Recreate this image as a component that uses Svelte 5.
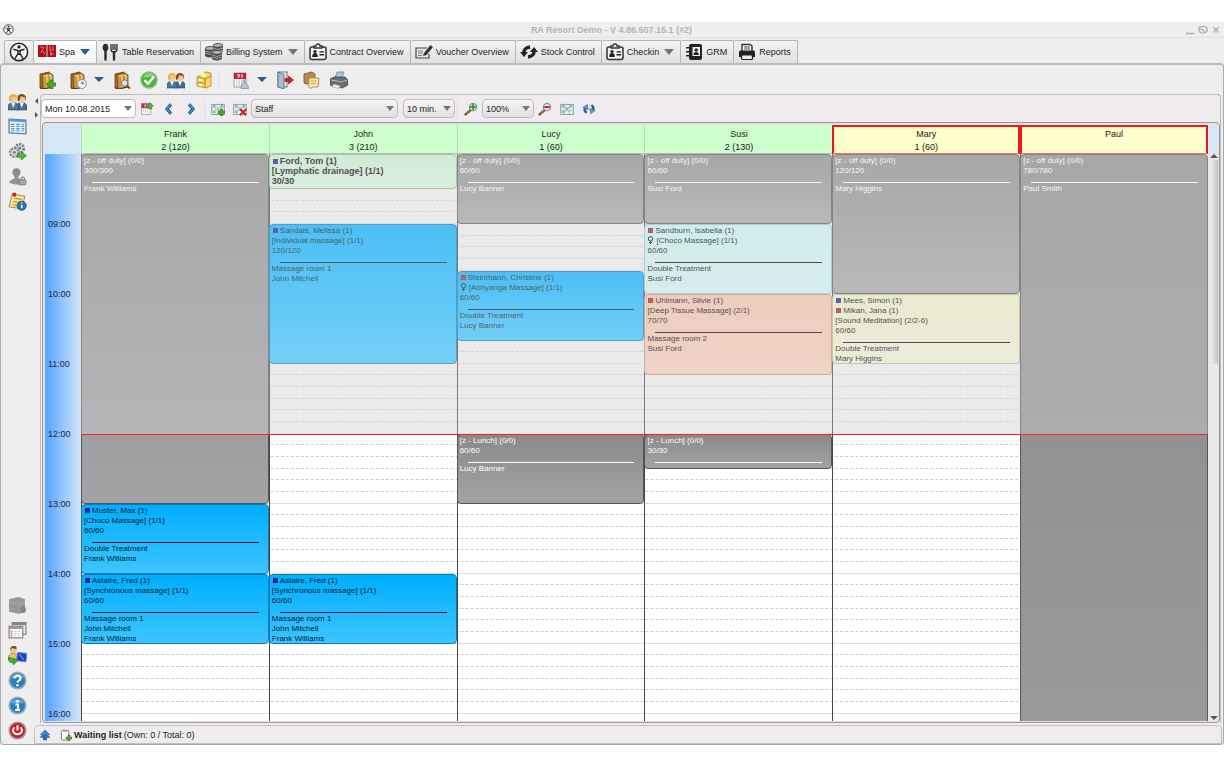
<script lang="ts">
  interface Booking {
    start: string;
    end: string;
    kind: string;
    guests?: { name: string; sex: "m" | "f" }[];
    title: string;
    female?: boolean;
    time: string;
    info?: string[];
    bold?: boolean;
  }
  interface Staff {
    name: string;
    load: string;
    warn?: boolean;
    bookings: Booking[];
  }

  const DAY_START = 8 * 60;
  const NOW = 12 * 60;

  const tabs = [
    { label: "Table Reservation", icon: "cutlery" },
    { label: "Billing System", icon: "coins", menu: true },
    { label: "Contract Overview", icon: "badge" },
    { label: "Voucher Overview", icon: "voucher" },
    { label: "Stock Control", icon: "cycle" },
    { label: "Checkin", icon: "badge", menu: true },
    { label: "GRM", icon: "contacts" },
    { label: "Reports", icon: "report" },
  ];

  const sideTop = [
    { label: "Guests", icon: "people" },
    { label: "Day list", icon: "list" },
    { label: "Process", icon: "gears" },
    { label: "Lock user", icon: "userlock" },
    { label: "Notes", icon: "noteinfo" },
  ];
  const sideBottom = [
    { label: "Database", icon: "server" },
    { label: "Windows", icon: "windows" },
    { label: "Switch user", icon: "switch" },
    { label: "Help", icon: "help" },
    { label: "Info", icon: "info" },
    { label: "Quit", icon: "power" },
  ];

  const offDuty = (end: string, time: string, who: string): Booking => ({
    start: "08:00", end, kind: "grey", title: "[z - off duty] (0/0)", time, info: [who],
  });
  const astaire: Booking = {
    start: "14:00", end: "15:00", kind: "blue",
    guests: [{ name: "Astaire, Fred (1)", sex: "m" }],
    title: "[Synchronous massage] (1/1)", time: "60/60",
    info: ["Massage room 1", "John Mitchell", "Frank Williams"],
  };

  const staff: Staff[] = [
    {
      name: "Frank", load: "2 (120)",
      bookings: [
        offDuty("13:00", "300/300", "Frank Williams"),
        {
          start: "13:00", end: "14:00", kind: "blue",
          guests: [{ name: "Muster, Max (1)", sex: "m" }],
          title: "[Choco Massage] (1/1)", time: "60/60",
          info: ["Double Treatment", "Frank Williams"],
        },
        astaire,
      ],
    },
    {
      name: "John", load: "3 (210)",
      bookings: [
        {
          start: "08:00", end: "08:30", kind: "green", bold: true,
          guests: [{ name: "Ford, Tom (1)", sex: "m" }],
          title: "[Lymphatic drainage] (1/1)", time: "30/30",
        },
        {
          start: "09:00", end: "11:00", kind: "blue",
          guests: [{ name: "Sandals, Melissa (1)", sex: "m" }],
          title: "[Individual massage] (1/1)", time: "120/120",
          info: ["Massage room 1", "John Mitchell"],
        },
        astaire,
      ],
    },
    {
      name: "Lucy", load: "1 (60)",
      bookings: [
        offDuty("09:00", "60/60", "Lucy Banner"),
        {
          start: "09:40", end: "10:40", kind: "blue", female: true,
          guests: [{ name: "Steinmann, Christine (1)", sex: "f" }],
          title: "[Abhyanga Massage] (1/1)", time: "60/60",
          info: ["Double Treatment", "Lucy Banner"],
        },
        { start: "12:00", end: "13:00", kind: "grey", title: "[z - Lunch] (0/0)", time: "60/60", info: ["Lucy Banner"] },
      ],
    },
    {
      name: "Susi", load: "2 (130)",
      bookings: [
        offDuty("09:00", "60/60", "Susi Ford"),
        {
          start: "09:00", end: "10:00", kind: "aqua", female: true,
          guests: [{ name: "Sandburn, Isabella (1)", sex: "f" }],
          title: "[Choco Massage] (1/1)", time: "60/60",
          info: ["Double Treatment", "Susi Ford"],
        },
        {
          start: "10:00", end: "11:10", kind: "peach",
          guests: [{ name: "Uhlmann, Silvie (1)", sex: "f" }],
          title: "[Deep Tissue Massage] (2/1)", time: "70/70",
          info: ["Massage room 2", "Susi Ford"],
        },
        { start: "12:00", end: "12:30", kind: "grey", title: "[z - Lunch] (0/0)", time: "30/30", info: [] },
      ],
    },
    {
      name: "Mary", load: "1 (60)", warn: true,
      bookings: [
        offDuty("10:00", "120/120", "Mary Higgins"),
        {
          start: "10:00", end: "11:00", kind: "cream",
          guests: [{ name: "Mees, Simon (1)", sex: "m" }, { name: "Mikan, Jana (1)", sex: "f" }],
          title: "[Sound Meditation] (2/2-6)", time: "60/60",
          info: ["Double Treatment", "Mary Higgins"],
        },
      ],
    },
    { name: "Paul", load: "", warn: true, bookings: [offDuty("21:00", "780/780", "Paul Smith")] },
  ];

  const hours = ["09:00", "10:00", "11:00", "12:00", "13:00", "14:00", "15:00", "16:00"];
  const slots = Array.from({ length: 60 }, (_, i) => i);

  let date = $state("Mon 10.08.2015");

  function row(time: string) {
    const [h, m] = time.split(":").map(Number);
    return (h * 60 + m - DAY_START) / 10 + 1;
  }
</script>

{#snippet bookShape()}
  <path d="M2 3l9-2 1 14-9 3-1-1z" fill="#a8702c" stroke="#5e3a12" stroke-width=".8" />
  <path d="M4 4l8-2 3 2v12l-10 2z" fill="#c8923f" stroke="#6e4516" stroke-width=".8" />
  <path d="M6 5l3-.6v12M11 4l2 1v10" stroke="#f5dc96" stroke-width="1.2" fill="none" />
  <path d="M2 16l3 2 10-2" stroke="#5e3a12" fill="none" />
{/snippet}

{#snippet personShape(x: number, hair: string, body: string)}
  <g transform="translate({x} 0)">
    <path d="M0 17q-1-7 5-7t5 7z" fill={body} stroke="#39424c" stroke-width=".6" />
    <path d="M3 10l2 5 2-5z" fill="#fff" />
    <circle cx="5" cy="6" r="3.4" fill="#f0c79a" />
    <path d="M1 9Q0 2 5 2t4 7L8 5 4 4 3 8z" fill={hair} />
  </g>
{/snippet}

{#snippet plusShape()}
  <path d="M12 9h3v3h3v3h-3v3h-3v-3H9v-3h3z" fill="#3fae2a" stroke="#1d6a12" stroke-width=".6" />
{/snippet}

{#snippet lensShape()}
  <path d="M9 10l-7 6" stroke="#7b4a22" stroke-width="3" stroke-linecap="round" />
  <path d="M9 10l-6 5" stroke="#c98d55" stroke-width="1" />
  <circle cx="11.5" cy="6.5" r="4.6" fill="#dfeaf2" stroke="#777f88" stroke-width="1.3" />
{/snippet}

{#snippet tableShape()}
  <rect x="1" y="3" width="16" height="13" fill="#e9f2f2" stroke="#6d8a96" />
  <path d="M1 7h16M1 11h16M6 3v13M12 3v13" stroke="#9cb8c2" stroke-width=".8" />
  <path d="M3 4h2v2H3zM8 8h2v2H8zM13 4h2v2h-2zM3 12h2v2H3z" fill="#4d9b8a" />
{/snippet}

{#snippet calShape()}
  <rect x="2" y="2" width="12" height="14" fill="#fff" stroke="#8a8a92" stroke-width=".8" />
  <rect x="2" y="2" width="12" height="6" fill="#c8202c" />
  <path d="M5 4h3l-2 3M10 3v4" stroke="#fff" fill="none" />
  <path d="M4 10h8M4 12h8M4 14h8" stroke="#a9b0ba" stroke-dasharray="1.5 1" />
{/snippet}

{#snippet icon(name: string, size = 18)}
  <svg class="icon" width={size} height={size} viewBox="0 0 18 18" fill="none" aria-hidden="true">
    {#if name === "logo"}
      <circle cx="9" cy="9" r="7.8" fill="#f4f4f4" stroke="#222" stroke-width="1.3" />
      <circle cx="9" cy="4.4" r="1.5" fill="#222" />
      <path d="M4 6.5l4 1.2v3L5.3 15M14 6.5l-4 1.2v3l2.7 4.3M8 8h2v3H8z" stroke="#222" stroke-width="1.3" />
    {:else if name === "spa"}
      <rect x="0" y="2" width="8.6" height="12" fill="#a80f18" />
      <rect x="9.4" y="2" width="8.6" height="12" fill="#a80f18" />
      <path d="M2 4h4l-3 6M5 8l2 3M12 3v3M15 3v3M11 7h5M12 11h4M13 8v5" stroke="#e0868b" stroke-width=".9" />
    {:else if name === "cutlery"}
      <ellipse cx="4.5" cy="4.5" rx="2.8" ry="3.8" fill="#2b2b2b" />
      <path d="M4.5 7v9.5M13 9v7.5" stroke="#2b2b2b" stroke-width="2.4" stroke-linecap="round" />
      <path d="M10 1v5q0 3 3 3t3-3V1M12 1v6M14 1v6" stroke="#2b2b2b" stroke-width="1.3" />
    {:else if name === "coins"}
      {#each [[0, 4, 14], [8, 1, 9], [7, 8, 17]] as [x, top, bottom]}
        <path d="M{x} {top + 1}v{bottom - top - 2}q5 3 10 0v-{bottom - top - 2}z" fill="#4a4a4a" />
        <path d="M{x} {top + 4}q5 3 10 0" stroke="#ccc" stroke-width=".7" />
        <path d="M{x} {top + 6}q5 3 10 0" stroke="#ccc" stroke-width=".7" />
        <ellipse cx={x + 5} cy={top + 1.4} rx="4.7" ry="1.9" fill="#bbb" stroke="#333" stroke-width=".8" />
      {/each}
    {:else if name === "badge"}
      <rect x="1" y="4" width="16" height="12.5" rx="2" fill="#f2f2f2" stroke="#333" stroke-width="1.5" />
      <path d="M5 5V3h2q0-2 2-2t2 2h2v2z" fill="#eee" stroke="#333" stroke-width="1.3" />
      <circle cx="6" cy="8.5" r="1.6" fill="#222" />
      <path d="M3.2 14q0-4 2.8-4t2.8 4zM10.5 8.2h4.5v1.4h-4.5zM10.5 11h4.5v1.4h-4.5z" fill="#222" />
    {:else if name === "voucher"}
      <path d="M12 5H1v10h13v-4" stroke="#444" stroke-width="1.2" />
      <path d="M3 8h5M3 10h5M3 12.5h4" stroke="#777" />
      <path d="M8 13l1-3 6.5-8L18 4l-6.5 8z" fill="#333" />
    {:else if name === "cycle"}
      <path d="M4 11Q3 5 10 4" stroke="#222" stroke-width="3.4" />
      <path d="M0 9h8l-4 5z" fill="#222" />
      <path d="M14 7q1 6-6 7" stroke="#222" stroke-width="3.4" />
      <path d="M18 9h-8l4-5z" fill="#222" />
    {:else if name === "contacts"}
      <rect x="4" y="1" width="13" height="16" rx="2" fill="#222" />
      <rect x="7.5" y="4" width="7.5" height="9" fill="#f3f3f3" />
      <circle cx="11.2" cy="7" r="1.7" fill="#222" />
      <path d="M8.5 12q0-3 2.7-3t2.7 3zM1 4h5v1.5H1zM1 8h5v1.5H1zM1 12h5v1.5H1z" fill="#222" />
    {:else if name === "report"}
      <path d="M4 8V1.5h8L14 3v5" fill="#f4f4f4" stroke="#333" stroke-width="1.4" />
      <path d="M6 4h6M6 6h6" stroke="#555" />
      <path d="M1 9q0-1.5 1.5-1.5h13Q17 7.5 17 9v5H1z" fill="#222" />
      <rect x="3.5" y="12" width="11" height="4.5" rx="1" fill="#eee" stroke="#222" stroke-width="1.2" />
    {:else if name === "bookadd"}
      {@render bookShape()}
      {@render plusShape()}
    {:else if name === "bookclock"}
      {@render bookShape()}
      <circle cx="13" cy="13" r="4.5" fill="#f3f5f7" stroke="#8a949d" />
      <path d="M13 10.5V13l2-1" stroke="#444" stroke-width=".9" />
    {:else if name === "booksearch"}
      {@render bookShape()}
      <path d="M13 14l4 3.5" stroke="#7b4a22" stroke-width="2" />
      <circle cx="11.5" cy="12" r="3.2" fill="#dbe8f1" stroke="#777" />
    {:else if name === "ok"}
      <circle cx="9" cy="9" r="8.2" fill="#46b53a" stroke="#a9b3a7" stroke-width="1.2" />
      <path d="M3 7q2-5 6-5t6 5q-6-2-12 0z" fill="#86d67c" />
      <path d="M4.5 9l3.5 3.7L14 5.5" stroke="#fff" stroke-width="2.4" />
    {:else if name === "people"}
      {@render personShape(8, "#7a4a1c", "#3f6f9f")}
      {@render personShape(0, "#e2b63c", "#4a78a5")}
    {:else if name === "boxes"}
      <path d="M2 6l9-5 5 1v13l-5 2-9-2z" fill="#f3d666" stroke="#b18d20" stroke-width=".8" />
      <path d="M2 6l8 2 6-3M10 8v9M2 11l8 1.5" stroke="#a98618" stroke-width=".9" />
      <path d="M7 1l5 3-2 2-5-2z" fill="#fff3b8" />
      <path d="M4 9h3M4 14h3" stroke="#fff" stroke-width="1.3" />
    {:else if name === "caluser"}
      {@render calShape()}
      <circle cx="12.5" cy="10" r="2" fill="#a8b6c6" />
      <path d="M9 17.5q0-6 3.5-6t4 6z" fill="#b9c6d6" stroke="#75879a" stroke-width=".7" />
    {:else if name === "calnew"}
      {@render calShape()}
      <path d="M13 1l4.5 4.5H15V9h-4V5.5H8.5z" fill="#4cb833" stroke="#1f7012" stroke-width=".6" />
    {:else if name === "exit"}
      <rect x="2" y="1" width="9" height="15" fill="#e8eef5" stroke="#68747f" />
      <path d="M2 1l6 2.5V18l-6-2z" fill="#aebdca" stroke="#56626d" stroke-width=".8" />
      <path d="M17.5 9l-5-4v2.5H9v3h3.5V13z" fill="#cf1a22" stroke="#7c0d12" stroke-width=".5" />
    {:else if name === "scroll"}
      <path d="M1 3l8-2 3 2v8l-8 2-3-1z" fill="#b98c4c" stroke="#6f4d20" stroke-width=".8" />
      <path d="M6 7h10l-1 9q-5-1-8 1.5L5.5 15z" fill="#f7e6a8" stroke="#a37e35" stroke-width=".8" />
      <path d="M8 10h5M8 12.5h5" stroke="#c8a65a" />
    {:else if name === "printer"}
      <path d="M5 7l2-6h7l-2 6z" fill="#a9c4e2" stroke="#6b7c8f" stroke-width=".7" />
      <path d="M0 8l4-2h11l3 3v5l-6 3-12-3z" fill="#6a6d71" stroke="#36383b" stroke-width=".7" />
      <path d="M1 9l11 2 5-2" stroke="#b5b8bc" />
      <path d="M4 13l7 2-3 2.5-6-2z" fill="#f2f2f2" stroke="#888" stroke-width=".5" />
    {:else if name === "prev"}
      <path d="M11.5 3l-5 6 5 6" stroke="#174f8c" stroke-width="4" />
      <path d="M11.5 3l-5 6 5 6" stroke="#3d8fd6" stroke-width="2" />
    {:else if name === "next"}
      <path d="M6.5 3l5 6-5 6" stroke="#174f8c" stroke-width="4" />
      <path d="M6.5 3l5 6-5 6" stroke="#3d8fd6" stroke-width="2" />
    {:else if name === "tableadd"}
      {@render tableShape()}
      {@render plusShape()}
    {:else if name === "tabledel"}
      {@render tableShape()}
      <path d="M9 9l8 8M17 9l-8 8" stroke="#d11a20" stroke-width="2.4" />
    {:else if name === "table"}
      {@render tableShape()}
      <path d="M5 6l8 7M13 6l-8 7" stroke="#7fc07a" />
    {:else if name === "zoomin"}
      {@render lensShape()}
      <path d="M11.5 3v7M8 6.5h7" stroke="#2fa01e" stroke-width="2.6" />
    {:else if name === "zoomout"}
      {@render lensShape()}
      <path d="M8 6.5h7" stroke="#d42027" stroke-width="2.6" />
    {:else if name === "refresh"}
      <path d="M6 14Q2 11 4 7" stroke="#2a5d9c" stroke-width="3" />
      <path d="M1 7l6-4 1 7z" fill="#5c9bd8" stroke="#234f86" stroke-width=".6" />
      <path d="M12 4q4 3 2 7" stroke="#2a5d9c" stroke-width="3" />
      <path d="M17 11l-6 4-1-7z" fill="#5c9bd8" stroke="#234f86" stroke-width=".6" />
    {:else if name === "list"}
      <path d="M1 2l16 1v13L1 15z" fill="#dff0fb" stroke="#5d7f9b" stroke-width="1.2" />
      <path d="M1 2l16 1v2L1 4z" fill="#4f9ad0" />
      <path d="M3 7h3M3 9h3M3 11h3M3 13h3M8 7h3M8 9h3M8 11h3M8 13h3M13 7h2M13 9h2M13 11h2M13 13h2" stroke="#4a90c6" />
    {:else if name === "gears"}
      <circle cx="11" cy="6" r="4" fill="#d5dadd" stroke="#737c82" stroke-width="2.4" stroke-dasharray="2 1" />
      <circle cx="6" cy="10" r="4" fill="#dfe3e5" stroke="#7f888e" stroke-width="2.4" stroke-dasharray="2 1" />
      <circle cx="11" cy="6" r="1.4" fill="#777" />
      <circle cx="6" cy="10" r="1.4" fill="#777" />
      <path d="M17.5 13l-5-4v2.5H9v3h3.5V17z" fill="#4cbc35" stroke="#1e7010" stroke-width=".6" />
    {:else if name === "userlock"}
      <circle cx="8" cy="5" r="3.8" fill="#8b8b8b" />
      <path d="M1 15q1-3 5-4V8h4v3q5 1 6 5-7 2-15-1z" fill="#929292" />
      <rect x="11" y="12" width="6" height="5" rx="1" fill="#a8a8a8" stroke="#777" stroke-width=".7" />
      <path d="M12.5 12v-1.5q1.5-2 3 0V12" stroke="#777" />
    {:else if name === "noteinfo"}
      <path d="M4 2l12 2-3 12-12-2z" fill="#f8e494" stroke="#a5873a" stroke-width=".9" />
      <path d="M6 6l7 1M5 9l7 1M4.5 12l5 1" stroke="#8d7331" stroke-width=".8" />
      <circle cx="6" cy="2.5" r="2" fill="#d3242a" />
      <circle cx="13" cy="13" r="4.3" fill="#2275b4" stroke="#134a78" stroke-width=".7" />
      <path d="M13 12v3.5M13 10v1" stroke="#fff" stroke-width="1.5" />
    {:else if name === "server"}
      <path d="M1 3l9-2 6 2v11l-5 3-10-2z" fill="#979797" />
      <path d="M1 6l10 2 5-2M11 8v9" stroke="#b0b0b0" stroke-width=".8" />
      <circle cx="14" cy="13" r="3" fill="#858585" />
    {:else if name === "windows"}
      <rect x="4" y="1.5" width="13" height="11" fill="#eee" stroke="#777" />
      <rect x="4" y="1.5" width="13" height="2.5" fill="#888" />
      <rect x="1" y="5" width="13" height="11" fill="#fafafa" stroke="#777" />
      <rect x="1" y="5" width="13" height="2.5" fill="#999" />
      <path d="M3 10h9M3 12h9M3 14h9" stroke="#d1c7bb" stroke-dasharray="2 1" />
      <path d="M3 9v6" stroke="#d98270" />
    {:else if name === "switch"}
      <circle cx="5" cy="4" r="3.2" fill="#efc491" />
      <path d="M2 4q0-4 3.5-4T8 3L4 2z" fill="#7b4a1c" />
      <path d="M0 13q0-6 5-6t5 6z" fill="#edc454" stroke="#666" stroke-width=".5" />
      <path d="M9 6l9 1-1 8-9-1z" fill="#153fd0" stroke="#7e8ea3" stroke-width=".9" />
      <path d="M11 8l4 5" stroke="#7fa2ff" />
      <path d="M0 11q0 5 5 5v2l4-4-4-3v2q-2 0-2-2z" fill="#3fae33" stroke="#1c6c14" stroke-width=".5" />
    {:else if name === "help"}
      <circle cx="9" cy="9" r="7.8" fill="#2b7fbd" stroke="#9eabb5" stroke-width="1.6" />
      <path d="M3 7q2-4 6-4t6 4q-6-1-12 0z" fill="#6cb0df" />
      <path d="M6.3 7q0-2.8 2.8-2.8T11.8 7q0 1.5-1.5 2.2Q9 10 9 11" stroke="#fff" stroke-width="1.9" />
      <circle cx="9" cy="13.5" r="1.2" fill="#fff" />
    {:else if name === "info"}
      <circle cx="9" cy="9" r="7.8" fill="#2b7fbd" stroke="#9eabb5" stroke-width="1.6" />
      <path d="M3 7q2-4 6-4t6 4q-6-1-12 0z" fill="#6cb0df" />
      <path d="M7 8h2.5v5M6.8 13.2h4.5" stroke="#fff" stroke-width="1.9" />
      <circle cx="9" cy="5" r="1.3" fill="#fff" />
    {:else if name === "power"}
      <circle cx="9" cy="9" r="7.8" fill="#d01820" stroke="#9b9b9b" stroke-width="1.6" />
      <path d="M6 6q-2.5 3 0 5.5 3 2 6 0 2.5-2.5 0-5.5M9 4v5" stroke="#fff" stroke-width="1.9" />
    {:else if name === "up"}
      <path d="M9 1l8 8h-3l3 4h-5v4H6v-4H1l3-4H1z" fill="#2b6cb8" />
      <path d="M3 10l6-5 6 5" stroke="#9cc4ee" />
    {:else if name === "clip"}
      <rect x="2" y="2.5" width="11" height="14" rx="1" fill="#fbfbfb" stroke="#77706a" stroke-width="1.3" />
      <rect x="5" y="1" width="5" height="3" fill="#999" />
      {@render plusShape()}
    {/if}
  </svg>
{/snippet}

<div class="window">
  <header class="titlebar">
    {@render icon("logo", 11)}
    <h1>RA Resort Demo - V 4.86.507.15.1 (#2)</h1>
    <div class="controls">
      <button aria-label="Minimize"><svg width="8" height="10" viewBox="0 0 8 10"><path d="M0 8.5h8" stroke="#aaa" stroke-width="1.5" /></svg></button>
      <button aria-label="Restore"><svg width="10" height="10" viewBox="0 0 10 10" fill="none"><path d="M3 1.5h4.5L9 3v3L7.5 7.5H6V6L4 4H1V2.5zM1 4v2l2 2h3" stroke="#aaa" stroke-width="1.2" /></svg></button>
      <button aria-label="Close"><svg width="8" height="10" viewBox="0 0 8 10"><path d="M1.5 2.5l5 5M6.5 2.5l-5 5" stroke="#aaa" stroke-width="1.3" /></svg></button>
    </div>
  </header>

  <nav class="tabs">
    <button class="tab home" aria-label="Home">{@render icon("logo", 20)}</button>
    <button class="tab active">{@render icon("spa")}<span>Spa</span><i class="caret accent"></i></button>
    {#each tabs as tab}
      <button class="tab">
        {@render icon(tab.icon)}<span>{tab.label}</span>
        {#if tab.menu}<i class="caret"></i>{/if}
      </button>
    {/each}
  </nav>

  <div class="body">
    <aside>
      {#each sideTop as item}
        <button aria-label={item.label}>{@render icon(item.icon, 19)}</button>
      {/each}
      <div class="spacer"></div>
      {#each sideBottom as item}
        <button aria-label={item.label}>{@render icon(item.icon, 19)}</button>
      {/each}
    </aside>

    <main>
      <div class="toolbar">
        <button aria-label="New booking">{@render icon("bookadd")}</button>
        <button class="wide" aria-label="Booking history">{@render icon("bookclock")}<i class="caret accent"></i></button>
        <button aria-label="Search booking">{@render icon("booksearch")}</button>
        <button aria-label="Confirm">{@render icon("ok")}</button>
        <button aria-label="Guests">{@render icon("people")}</button>
        <button class="packages" aria-label="Packages">{@render icon("boxes")}</button>
        <button class="wide" aria-label="Staff calendar">{@render icon("caluser")}<i class="caret accent"></i></button>
        <button aria-label="Check out">{@render icon("exit")}</button>
        <button aria-label="Log">{@render icon("scroll")}</button>
        <button aria-label="Print">{@render icon("printer")}</button>
      </div>

      <div class="work">
        <div class="splitter"><i class="left"></i><i class="right"></i></div>
        <section class="panel">
          <div class="filters">
            <label class="combo date"><input aria-label="Date" bind:value={date} /><i class="caret"></i></label>
            <button aria-label="Today">{@render icon("calnew", 14)}</button>
            <button aria-label="Previous day">{@render icon("prev", 14)}</button>
            <button aria-label="Next day">{@render icon("next", 14)}</button>
            <span class="sep"></span>
            <button aria-label="Add view">{@render icon("tableadd", 14)}</button>
            <button aria-label="Remove view">{@render icon("tabledel", 14)}</button>
            <label class="combo view"><select aria-label="View"><option>Staff</option></select><i class="caret"></i></label>
            <label class="combo small"><select aria-label="Interval"><option>10 min.</option></select><i class="caret"></i></label>
            <span class="sep"></span>
            <button aria-label="Zoom in">{@render icon("zoomin", 14)}</button>
            <label class="combo small"><select aria-label="Zoom"><option>100%</option></select><i class="caret"></i></label>
            <button aria-label="Zoom out">{@render icon("zoomout", 14)}</button>
            <button aria-label="Fit">{@render icon("table", 14)}</button>
            <button aria-label="Refresh">{@render icon("refresh", 14)}</button>
          </div>

          <div class="calendar">
            <div class="heads">
              <div class="corner"></div>
              {#each staff as person}
                <div class="head" class:warn={person.warn}>
                  <div>{person.name}</div>
                  <div>{person.load}</div>
                </div>
              {/each}
              <div class="corner end"></div>
            </div>

            <div class="grid">
              <div class="times">
                {#each hours as hour}<div>{hour}</div>{/each}
              </div>
              <div class="days">
                <div class="lines">
                  {#each slots as slot}
                    <div class="slot" class:hour={slot % 6 === 5} class:gone={slot * 10 + DAY_START < NOW}></div>
                  {/each}
                </div>
                {#each staff as person}
                  <div class="day">
                    {#each person.bookings as b}
                      <article class="booking {b.kind}" class:bold={b.bold} style:grid-row="{row(b.start)} / {row(b.end)}">
                        {#each b.guests ?? [] as guest}
                          <div><i class="sex {guest.sex}"></i>{guest.name}</div>
                        {/each}
                        <div>
                          {#if b.female}<svg class="female" width="8" height="8" viewBox="0 0 8 8" fill="none" stroke="currentColor"><circle cx="3.5" cy="2.8" r="2.2" /><path d="M3.5 5v3M2 6.5h3" /></svg>{/if}{b.title}
                        </div>
                        <div>{b.time}</div>
                        {#if b.info}
                          <hr />
                          {#each b.info as line}<div>{line}</div>{/each}
                        {/if}
                      </article>
                    {/each}
                  </div>
                {/each}
                <div class="past" style:height="calc(var(--hour) * {(NOW - DAY_START) / 60})"><div class="now"></div></div>
              </div>
              <div class="scrollbar"><i class="up"></i><div class="thumb"></div><i class="down"></i></div>
            </div>
          </div>
        </section>
      </div>

      <footer>
        <button aria-label="Expand">{@render icon("up", 12)}</button>
        <button class="waiting">{@render icon("clip", 12)}<b>Waiting list</b><span>(Own: 0 / Total: 0)</span></button>
      </footer>
    </main>
  </div>
</div>

<style>
  :global(body) { background: #fff; }
  .window {
    --hour: 70px;
    box-sizing: border-box;
    height: calc(100vh - 45px); min-height: 500px;
    margin-top: 22px;
    display: flex; flex-direction: column;
    background: #eee;
    font: 9px/12px "Liberation Sans", Arial, sans-serif;
    color: #222;
  }
  button {
    display: flex; align-items: center; justify-content: center;
    padding: 0; border: 0; background: none;
    font: inherit; color: inherit;
  }
  .icon { flex: none; display: block; }

  .caret {
    flex: none; width: 0; height: 0;
    border: 4px solid transparent; border-top: 5px solid #777; border-bottom: 0;
  }
  .caret.accent { border-top-color: #1f5f9f; border-left-width: 5px; border-right-width: 5px; }

  .titlebar {
    display: grid; grid-template-columns: 40px 1fr 40px; align-items: center;
    box-sizing: border-box; height: 16px; padding: 0 4px 0 3px;
    border-bottom: 1px solid #e2e2e2;
  }
  h1 { margin: 0; font-size: 9px; font-weight: 700; color: #b4b4b4; text-align: center; }
  .controls { display: flex; justify-content: flex-end; gap: 4px; }

  .tabs { display: flex; box-sizing: border-box; height: 25px; padding: 2px 4px 0; }
  .tab {
    gap: 3px; padding: 0 6px 0 4px; white-space: nowrap;
    border: 1px solid #b5b5b5; border-left: 0; border-bottom: 0;
    border-radius: 2px 2px 0 0;
    background: linear-gradient(#f3f3f3, #e0e0e0);
  }
  .tab .caret { margin-left: 2px; border-width: 6px 5px 0; }
  .tab.home { padding: 0 4px; border-left: 1px solid #b5b5b5; }
  .tab.active { background: linear-gradient(#fff, #f2f2f2); }

  .body {
    flex: 1; min-height: 0; display: flex;
    border: 1px solid #aaa; border-top: 2px solid #bbb; border-radius: 4px;
  }
  aside {
    flex: none; width: 32px; box-sizing: border-box;
    display: flex; flex-direction: column; align-items: center;
    padding: 24px 0 1px;
  }
  aside button { height: 25px; }
  .spacer { flex: 1; }

  main { flex: 1; min-width: 0; display: flex; flex-direction: column; }
  .toolbar { flex: none; display: flex; align-items: center; height: 29px; }
  .toolbar button { width: 27px; }
  .toolbar .wide { width: 44px; gap: 7px; margin-left: 4px; }
  .toolbar .packages { width: 30px; border-left: 1px solid #e2e2e2; border-right: 1px solid #e2e2e2; margin-right: 4px; }

  .work { flex: 1; min-height: 0; display: flex; }
  .splitter {
    flex: none; width: 7px; box-sizing: border-box; padding-top: 4px;
    display: flex; flex-direction: column; align-items: center; gap: 8px;
  }
  .splitter i { width: 0; height: 0; border: 3px solid transparent; }
  .splitter .left { border-right-color: #555; border-left: 0; }
  .splitter .right { border-left-color: #555; border-right: 0; }

  .panel {
    flex: 1; min-width: 0; display: flex; flex-direction: column;
    border: 1px solid #bbb; border-radius: 4px 4px 0 0; border-bottom: 0;
    background: #f0ebef; margin-right: 2px;
  }
  .filters { flex: none; display: flex; align-items: center; height: 27px; }
  .filters button { width: 22px; }
  .sep { width: 1px; height: 20px; margin: 0 2px; background: #e2dde1; }
  .combo {
    position: relative; box-sizing: border-box;
    display: flex; align-items: center;
    height: 19px; border: 1px solid #bcbcbc; border-radius: 4px;
    background: linear-gradient(#f6f6f6, #e0e0e0);
  }
  .combo select, .combo input {
    width: 100%; height: 100%; box-sizing: border-box;
    padding: 0 3px; border: 0; outline: 0; appearance: none;
    background: none; font: inherit; color: inherit;
  }
  .combo .caret { position: absolute; right: 3px; pointer-events: none; }
  .combo.date { width: 95px; background: #fff; }
  .combo.view { width: 147px; margin-right: 5px; }
  .combo.small { width: 52px; }

  .calendar {
    flex: 1; min-height: 0; display: flex; flex-direction: column;
    margin-left: 1px; padding: 2px 1px 1px 2px;
    border: 1px solid #999; border-radius: 4px; background: #e4e2e4;
  }
  .heads { display: grid; grid-template-columns: 36px repeat(6, minmax(0, 1fr)) 10px; flex: none; height: 29px; }
  .grid { display: grid; grid-template-columns: 36px minmax(0, 1fr) 10px; flex: 1; min-height: 0; overflow: hidden; }
  .corner { background: #d5e6f7; }
  .corner.end { border-radius: 0 3px 0 0; }
  .head {
    box-sizing: border-box; padding-top: 3px; line-height: 13px; text-align: center;
    border-left: 1px solid #bcd8bc; border-bottom: 1px solid #bbb;
    background: #cfc; overflow: hidden;
  }
  .head.warn { padding-top: 1px; border: 2px solid #f01818; border-bottom: 1px solid #ff6a5a; background: #ffc; }

  .times {
    height: 100%; overflow: hidden; min-height: 0;
    padding-top: calc(var(--hour) / 2); box-sizing: border-box;
    background: linear-gradient(90deg, #55a4ff, #d3e5fa);
  }
  .times div { height: var(--hour); line-height: var(--hour); padding-left: 3px; color: #14283c; }

  .days {
    position: relative; overflow: hidden; min-height: 0;
    display: grid; grid-template-columns: repeat(6, minmax(0, 1fr));
    background: #fff;
  }
  .lines { position: absolute; inset: 0; }
  .slot { box-sizing: border-box; height: calc(var(--hour) / 6); border-bottom: 1px dashed #ccc; }
  .slot.hour { border-bottom: 1px solid #ddd; }
  .slot.gone { background: #eee; }
  .day {
    position: relative; min-height: 0;
    display: grid; grid-auto-rows: calc(var(--hour) / 6);
    grid-template-columns: minmax(0, 1fr);
    border-left: 1px solid #444;
  }
  .booking {
    box-sizing: border-box; overflow: hidden;
    padding: 1px 9px 0 2px; margin-left: -1px;
    border: 1px solid; border-radius: 4px;
    font-size: 8px; line-height: 10px; white-space: nowrap; color: #000;
  }
  .booking div { height: 10px; }
  .booking.bold { font-size: 9px; font-weight: 700; }
  .booking hr { height: 7px; box-sizing: border-box; margin: 0 0 1px 8px; border: 0; border-bottom: 1px solid; color: inherit; }
  .booking.grey { background: linear-gradient(#8a8a8a, #a4a2a5); border-color: #555; color: #fff; }
  .booking.blue { background: linear-gradient(#00aeff, #3cc5ff); border-color: #0b7cba; color: #001a2c; }
  .booking.green { background: linear-gradient(#c8efd0, #d3f3da); border-color: #8ab894; }
  .booking.aqua { background: linear-gradient(#c6f0f0, #d2f2f2); border-color: #8fc4c4; }
  .booking.peach { background: linear-gradient(#f1c2ab, #f3cdb9); border-color: #c08c74; }
  .booking.cream { background: linear-gradient(#eeeec4, #f0f0d8); border-color: #b9b984; }
  .sex { display: inline-block; width: 5px; height: 5px; margin: 0 2px 0 1px; }
  .sex.m { background: #0a16d8; outline: 1px solid #1a2a6a; outline-offset: -1px; }
  .sex.f { background: #e01212; outline: 1px solid #8a2020; outline-offset: -1px; }
  .female { vertical-align: -1px; margin-right: 1px; }

  .past {
    position: absolute; top: 0; left: 0; right: 0;
    display: flex; align-items: flex-end;
    background: rgba(228, 228, 228, 0.33);
    pointer-events: none;
  }
  .now { flex: 1; height: 1px; background: #f22; margin-bottom: -1px; }

  .scrollbar {
    min-height: 0; background: #e9e9e9; padding-left: 2px;
    display: flex; flex-direction: column; align-items: center;
  }
  .scrollbar i { flex: none; width: 0; height: 0; border: 4px solid transparent; }
  .scrollbar .up { border-top: 0; border-bottom-color: #555; }
  .scrollbar .down { border-bottom: 0; border-top-color: #555; margin: auto 0 1px; }
  .thumb { width: 7px; height: 36%; margin-top: 2px; border-right: 1px solid #bbb; border-radius: 0 0 2px 2px; background: linear-gradient(90deg, #eee, #ccc); }

  footer {
    flex: none; box-sizing: border-box; height: 19px;
    display: flex; align-items: center; gap: 9px; padding-left: 4px;
    margin: 2px 1px 0; border: 1px solid #c2bec2; border-radius: 4px 4px 0 0; background: #f0ebef;
  }
  .waiting { gap: 2px; }
</style>
